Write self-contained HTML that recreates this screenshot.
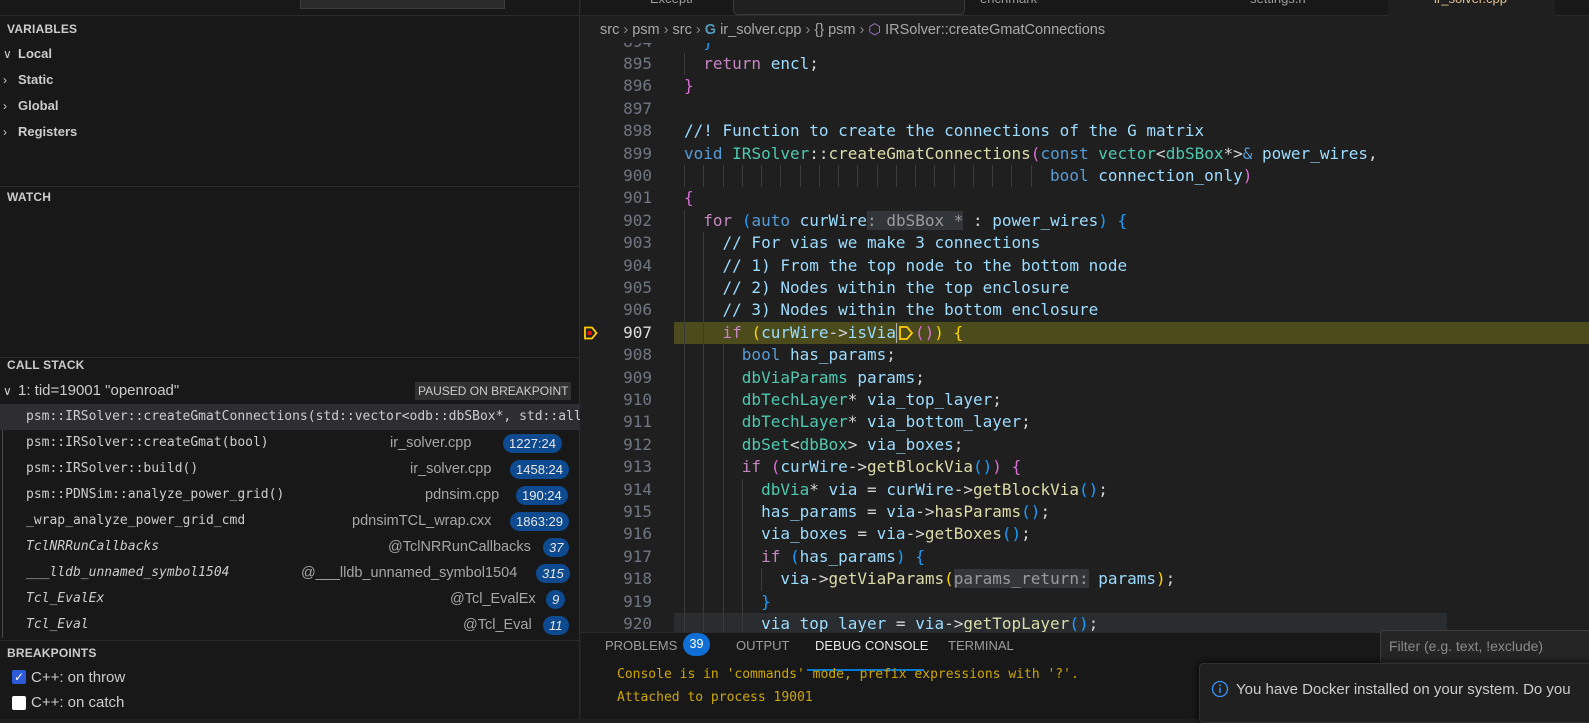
<!DOCTYPE html>
<html><head><meta charset="utf-8"><style>
*{margin:0;padding:0;box-sizing:border-box}
body{width:1589px;height:719px;overflow:hidden;background:#1f1f1f;position:relative;font-family:"Liberation Sans","DejaVu Sans",sans-serif;color:#ccc}
.abs{position:absolute}
#left{left:0;top:0;width:580px;height:719px;background:#181818;border-right:1px solid #2b2b2b}
.hdr{position:absolute;left:7px;font-size:12px;font-weight:bold;color:#ccc;letter-spacing:.2px}
.row{position:absolute;left:0;font-size:13px;color:#ccc;height:26px;line-height:26px;width:580px}
.chev{position:absolute;left:3px;top:0;color:#ccc;font-size:12px}
.sep{position:absolute;left:0;width:580px;height:1px;background:#2b2b2b}
.fr{position:absolute;left:0;width:580px;height:26px;line-height:26px;font-family:"DejaVu Sans Mono",monospace;font-size:13px;color:#ccc;overflow:hidden}
.fr .n{position:absolute;left:26px;white-space:nowrap}
.fr .f{position:absolute;font-family:"Liberation Sans",sans-serif;font-size:14.5px;color:#a6a6a6;white-space:nowrap;font-style:normal}
.fr .b{position:absolute;top:4px;height:19px;line-height:19px;background:#0e4a8f;color:#e8e8e8;border-radius:10px;font-family:"Liberation Sans",sans-serif;font-size:13px;padding:0 6px;text-align:center}
.it{font-style:italic}
#ed{left:581px;top:0;width:1008px;height:632px;background:#1f1f1f;overflow:hidden}
.code{position:absolute;left:0;top:30.5px;width:1008px;font-family:"DejaVu Sans Mono",monospace;font-size:16px}
.l{position:relative;height:22.42px;line-height:22.42px;white-space:nowrap}
.l .ln{position:absolute;left:0;width:71px;text-align:right;color:#6e7681}
.l .c{position:absolute;left:103px;color:#9cdcfe;white-space:pre}
.g{position:absolute;top:0;width:1px;height:22.42px;background:#3a3a3a}
.k{color:#c586c0}.kb{color:#569cd6}.t{color:#4ec9b0}.fn{color:#dcdcaa}.cm{color:#6a9955}.p{color:#d4d4d4}
.b1{color:#ffd700}.b2{color:#da70d6}.b3{color:#179fff}
.h{background:#333638;color:#9a9a9a}
#bc{left:581px;top:17px;height:26px;width:1008px;background:#1f1f1f;font-size:14.5px;color:#a9a9a9;line-height:26px;padding-left:19px;white-space:nowrap}
#panel{left:581px;top:632px;width:1008px;height:87px;background:#181818;border-top:1px solid #2b2b2b}
.tab{position:absolute;top:5px;font-size:13px;color:#9d9d9d}
</style></head><body>
<div id="left" class="abs">
  <div class="abs" style="left:300px;top:-4px;width:205px;height:13px;border:1px solid #3c3c3c;background:#2a2a2a"></div>
  <div class="abs" style="left:0;top:15px;width:580px;height:1px;background:#2b2b2b"></div>
  <div class="hdr" style="top:22px">VARIABLES</div>
  <div class="row" style="top:41px"><span class="chev">&#8744;</span><span style="position:absolute;left:18px;font-weight:bold;font-size:13px">Local</span></div>
  <div class="row" style="top:67px"><span class="chev">&#8250;</span><span style="position:absolute;left:18px;font-weight:bold;font-size:13px">Static</span></div>
  <div class="row" style="top:93px"><span class="chev">&#8250;</span><span style="position:absolute;left:18px;font-weight:bold;font-size:13px">Global</span></div>
  <div class="row" style="top:119px"><span class="chev">&#8250;</span><span style="position:absolute;left:18px;font-weight:bold;font-size:13px">Registers</span></div>
  <div class="sep" style="top:186px"></div>
  <div class="hdr" style="top:190px">WATCH</div>
  <div class="sep" style="top:357px"></div>
  <div class="hdr" style="top:358px">CALL STACK</div>
  <div class="row" style="top:378px"><span class="chev">&#8744;</span><span style="position:absolute;left:18px;font-size:15px">1: tid=19001 "openroad"</span>
    <span style="position:absolute;left:415px;top:4px;height:18px;line-height:18px;padding:0 3px;background:#313131;font-size:12px;color:#ccc">PAUSED ON BREAKPOINT</span></div>
  <div class="abs" style="left:2px;top:404px;width:1px;height:234px;background:#4a4a4a"></div>
  <div class="fr" style="top:404px;background:#2e2e32"><span class="n">psm::IRSolver::createGmatConnections(std::vector&lt;odb::dbSBox*, std::allo</span></div>
  <div class="fr" style="top:430px"><span class="n">psm::IRSolver::createGmat(bool)</span><span class="f" style="left:390px">ir_solver.cpp</span><span class="b" style="left:503px">1227:24</span></div>
  <div class="fr" style="top:456px"><span class="n">psm::IRSolver::build()</span><span class="f" style="left:410px">ir_solver.cpp</span><span class="b" style="left:510px">1458:24</span></div>
  <div class="fr" style="top:482px"><span class="n">psm::PDNSim::analyze_power_grid()</span><span class="f" style="left:425px">pdnsim.cpp</span><span class="b" style="left:516px">190:24</span></div>
  <div class="fr" style="top:508px"><span class="n">_wrap_analyze_power_grid_cmd</span><span class="f" style="left:352px">pdnsimTCL_wrap.cxx</span><span class="b" style="left:510px">1863:29</span></div>
  <div class="fr it" style="top:534px"><span class="n">TclNRRunCallbacks</span><span class="f it" style="left:388px">@TclNRRunCallbacks</span><span class="b" style="left:543px">37</span></div>
  <div class="fr it" style="top:560px"><span class="n">___lldb_unnamed_symbol1504</span><span class="f it" style="left:301px">@___lldb_unnamed_symbol1504</span><span class="b" style="left:536px">315</span></div>
  <div class="fr it" style="top:586px"><span class="n">Tcl_EvalEx</span><span class="f it" style="left:450px">@Tcl_EvalEx</span><span class="b" style="left:546px">9</span></div>
  <div class="fr it" style="top:612px"><span class="n">Tcl_Eval</span><span class="f it" style="left:463px">@Tcl_Eval</span><span class="b" style="left:543px">11</span></div>
  <div class="sep" style="top:640px"></div>
  <div class="hdr" style="top:646px">BREAKPOINTS</div>
  <div class="abs" style="left:12px;top:670px;width:14px;height:14px;background:#2d5bd8;border-radius:2px;color:#fff;font-size:12px;line-height:14px;text-align:center">&#10003;</div>
  <div class="abs" style="left:31px;top:669px;font-size:15px;color:#ccc">C++: on throw</div>
  <div class="abs" style="left:12px;top:696px;width:14px;height:14px;background:#fff;border-radius:2px"></div>
  <div class="abs" style="left:31px;top:694px;font-size:15px;color:#ccc">C++: on catch</div>
</div>

<div id="ed" class="abs">
<div class="code">
<div class="l"><span class="ln">894</span><span class="c">  <span class="b3">}</span></span></div>
<div class="l"><span class="ln">895</span><span class="c"><i class="g" style="left:0"></i>  <span class="k">return</span> encl<span class="p">;</span></span></div>
<div class="l"><span class="ln">896</span><span class="c"><span class="b2">}</span></span></div>
<div class="l"><span class="ln">897</span><span class="c"></span></div>
<div class="l"><span class="ln">898</span><span class="c cm">//! Function to create the connections of the G matrix</span></div>
<div class="l"><span class="ln">899</span><span class="c"><span class="kb">void</span> <span class="t">IRSolver</span><span class="p">::</span><span class="fn">createGmatConnections</span><span class="b2">(</span><span class="kb">const</span> <span class="t">vector</span><span class="p">&lt;</span><span class="t">dbSBox</span><span class="p">*&gt;</span><span class="kb">&amp;</span> power_wires<span class="p">,</span></span></div>
<div class="l"><span class="ln">900</span><span class="c"><i class="g" style="left:0"></i><i class="g" style="left:19.3px"></i><i class="g" style="left:38.5px"></i><i class="g" style="left:57.8px"></i><i class="g" style="left:77px"></i><i class="g" style="left:96.3px"></i><i class="g" style="left:115.6px"></i><i class="g" style="left:134.8px"></i><i class="g" style="left:154px"></i><i class="g" style="left:173.3px"></i><i class="g" style="left:192.6px"></i><i class="g" style="left:211.8px"></i><i class="g" style="left:231px"></i><i class="g" style="left:250.4px"></i><i class="g" style="left:269.6px"></i><i class="g" style="left:288.9px"></i><i class="g" style="left:308px"></i><i class="g" style="left:327.4px"></i><i class="g" style="left:346.6px"></i>                                      <span class="kb">bool</span> connection_only<span class="b2">)</span></span></div>
<div class="l"><span class="ln">901</span><span class="c"><span class="b2">{</span></span></div>
<div class="l"><span class="ln">902</span><span class="c"><i class="g" style="left:0"></i>  <span class="k">for</span> <span class="b3">(</span><span class="kb">auto</span> curWire<span class="h">: dbSBox *</span> <span class="p">:</span> power_wires<span class="b3">)</span> <span class="b3">{</span></span></div>
<div class="l"><span class="ln">903</span><span class="c cm"><i class="g" style="left:0"></i><i class="g" style="left:19.3px"></i>    // For vias we make 3 connections</span></div>
<div class="l"><span class="ln">904</span><span class="c cm"><i class="g" style="left:0"></i><i class="g" style="left:19.3px"></i>    // 1) From the top node to the bottom node</span></div>
<div class="l"><span class="ln">905</span><span class="c cm"><i class="g" style="left:0"></i><i class="g" style="left:19.3px"></i>    // 2) Nodes within the top enclosure</span></div>
<div class="l"><span class="ln">906</span><span class="c cm"><i class="g" style="left:0"></i><i class="g" style="left:19.3px"></i>    // 3) Nodes within the bottom enclosure</span></div>
<div class="l" style="background:linear-gradient(to right,transparent 93px,#4b4b1c 93px)"><span class="ln" style="color:#ddd">907</span><svg style="position:absolute;left:2px;top:3px" width="16" height="16" viewBox="0 0 16 16"><path d="M2 2.5h7l4.5 5.5-4.5 5.5H2z" fill="none" stroke="#ffcc00" stroke-width="1.8"/><circle cx="6.5" cy="8" r="2.3" fill="#e51400"/></svg><span class="c"><i class="g" style="left:0"></i><i class="g" style="left:19.3px"></i>    <span class="k">if</span> <span class="b1">(</span>curWire<span class="p">-&gt;</span>isVia<span style="display:inline-block;width:0;border-left:1.5px solid #aeafad;height:20px;vertical-align:middle"></span><svg width="18" height="16" viewBox="0 0 18 16" style="vertical-align:-3px"><path d="M3 2h7l5 6-5 6H3z" fill="none" stroke="#ffcc00" stroke-width="1.8"/></svg><span class="b2">()</span><span class="b1">)</span> <span class="b1">{</span></span></div>
<div class="l"><span class="ln">908</span><span class="c"><i class="g" style="left:0"></i><i class="g" style="left:19.3px"></i><i class="g" style="left:38.5px"></i>      <span class="kb">bool</span> has_params<span class="p">;</span></span></div>
<div class="l"><span class="ln">909</span><span class="c"><i class="g" style="left:0"></i><i class="g" style="left:19.3px"></i><i class="g" style="left:38.5px"></i>      <span class="t">dbViaParams</span> params<span class="p">;</span></span></div>
<div class="l"><span class="ln">910</span><span class="c"><i class="g" style="left:0"></i><i class="g" style="left:19.3px"></i><i class="g" style="left:38.5px"></i>      <span class="t">dbTechLayer</span><span class="p">*</span> via_top_layer<span class="p">;</span></span></div>
<div class="l"><span class="ln">911</span><span class="c"><i class="g" style="left:0"></i><i class="g" style="left:19.3px"></i><i class="g" style="left:38.5px"></i>      <span class="t">dbTechLayer</span><span class="p">*</span> via_bottom_layer<span class="p">;</span></span></div>
<div class="l"><span class="ln">912</span><span class="c"><i class="g" style="left:0"></i><i class="g" style="left:19.3px"></i><i class="g" style="left:38.5px"></i>      <span class="t">dbSet</span><span class="p">&lt;</span><span class="t">dbBox</span><span class="p">&gt;</span> via_boxes<span class="p">;</span></span></div>
<div class="l"><span class="ln">913</span><span class="c"><i class="g" style="left:0"></i><i class="g" style="left:19.3px"></i><i class="g" style="left:38.5px"></i>      <span class="k">if</span> <span class="b2">(</span>curWire<span class="p">-&gt;</span><span class="fn">getBlockVia</span><span class="b3">()</span><span class="b2">)</span> <span class="b2">{</span></span></div>
<div class="l"><span class="ln">914</span><span class="c"><i class="g" style="left:0"></i><i class="g" style="left:19.3px"></i><i class="g" style="left:38.5px"></i><i class="g" style="left:57.8px"></i>        <span class="t">dbVia</span><span class="p">*</span> via <span class="p">=</span> curWire<span class="p">-&gt;</span><span class="fn">getBlockVia</span><span class="b3">()</span><span class="p">;</span></span></div>
<div class="l"><span class="ln">915</span><span class="c"><i class="g" style="left:0"></i><i class="g" style="left:19.3px"></i><i class="g" style="left:38.5px"></i><i class="g" style="left:57.8px"></i>        has_params <span class="p">=</span> via<span class="p">-&gt;</span><span class="fn">hasParams</span><span class="b3">()</span><span class="p">;</span></span></div>
<div class="l"><span class="ln">916</span><span class="c"><i class="g" style="left:0"></i><i class="g" style="left:19.3px"></i><i class="g" style="left:38.5px"></i><i class="g" style="left:57.8px"></i>        via_boxes <span class="p">=</span> via<span class="p">-&gt;</span><span class="fn">getBoxes</span><span class="b3">()</span><span class="p">;</span></span></div>
<div class="l"><span class="ln">917</span><span class="c"><i class="g" style="left:0"></i><i class="g" style="left:19.3px"></i><i class="g" style="left:38.5px"></i><i class="g" style="left:57.8px"></i>        <span class="k">if</span> <span class="b3">(</span>has_params<span class="b3">)</span> <span class="b3">{</span></span></div>
<div class="l"><span class="ln">918</span><span class="c"><i class="g" style="left:0"></i><i class="g" style="left:19.3px"></i><i class="g" style="left:38.5px"></i><i class="g" style="left:57.8px"></i><i class="g" style="left:77px"></i>          via<span class="p">-&gt;</span><span class="fn">getViaParams</span><span class="b1">(</span><span class="h">params_return:</span> params<span class="b1">)</span><span class="p">;</span></span></div>
<div class="l"><span class="ln">919</span><span class="c"><i class="g" style="left:0"></i><i class="g" style="left:19.3px"></i><i class="g" style="left:38.5px"></i><i class="g" style="left:57.8px"></i>        <span class="b3">}</span></span></div>
<div class="l" style="background:linear-gradient(to right,transparent 93px,#2a2d30 93px,#2a2d30 866px,transparent 866px)"><span class="ln">920</span><span class="c"><i class="g" style="left:0"></i><i class="g" style="left:19.3px"></i><i class="g" style="left:38.5px"></i><i class="g" style="left:57.8px"></i>        via_top_layer <span class="p">=</span> via<span class="p">-&gt;</span><span class="fn">getTopLayer</span><span class="b3">()</span><span class="p">;</span></span></div>
</div>
</div>
<div class="abs" style="left:581px;top:0;width:1008px;height:16px;background:#181818;border-bottom:1px solid #2b2b2b"></div>
<div class="abs" style="left:1388px;top:0;width:167px;height:16px;background:#1f1f1f"></div>
<div class="abs" style="left:1434px;top:-9px;font-size:13px;color:#e2c08d">ir_solver.cpp</div>
<div class="abs" style="left:650px;top:-9px;font-size:13px;color:#9d9d9d">Excepti</div>
<div class="abs" style="left:980px;top:-9px;font-size:13px;color:#9d9d9d">enchmark</div>
<div class="abs" style="left:1250px;top:-9px;font-size:13px;color:#9d9d9d">settings.h</div>
<div class="abs" style="left:733px;top:0;width:232px;height:15px;background:#202020;border:1px solid #3a3a3a;border-top:none;border-radius:0 0 5px 5px"></div>
<div id="bc" class="abs">src <span style="color:#888">&#8250;</span> psm <span style="color:#888">&#8250;</span> src <span style="color:#888">&#8250;</span> <span style="color:#519aba;font-weight:bold">G</span> ir_solver.cpp <span style="color:#888">&#8250;</span> {} psm <span style="color:#888">&#8250;</span> <span style="color:#b180d7">&#11041;</span> IRSolver::createGmatConnections</div>

<div id="panel" class="abs">
  <div class="tab" style="left:24px">PROBLEMS</div>
  <div class="abs" style="left:102px;top:0;width:27px;height:23px;border-radius:12px;background:#0f6fd6;color:#fff;font-size:12.5px;line-height:23px;text-align:center">39</div>
  <div class="tab" style="left:155px">OUTPUT</div>
  <div class="tab" style="left:234px;color:#e7e7e7">DEBUG CONSOLE</div>
  <div class="abs" style="left:226px;top:36px;height:2px;width:117px;background:#0078d4"></div>
  <div class="tab" style="left:367px">TERMINAL</div>
  <div class="abs" style="left:799px;top:-3px;width:210px;height:33px;background:#252525;border:1px solid #3c3c3c;border-radius:2px;font-size:14px;color:#8a8a8a;line-height:31px;padding-left:8px">Filter (e.g. text, !exclude)</div>
  <div class="abs" style="left:36px;top:34px;font-family:'DejaVu Sans Mono',monospace;font-size:13px;color:#cca700;white-space:pre">Console is in 'commands' mode, prefix expressions with '?'.</div>
  <div class="abs" style="left:36px;top:57px;font-family:'DejaVu Sans Mono',monospace;font-size:13px;color:#cca700;white-space:pre">Attached to process 19001</div>
  <div class="abs" style="left:618px;top:30px;width:400px;height:60px;background:#202020;border:1px solid #303030;border-radius:4px;box-shadow:0 0 8px #000"></div>
  <svg class="abs" style="left:630px;top:47px" width="18" height="18" viewBox="0 0 18 18"><circle cx="9" cy="9" r="7.5" fill="none" stroke="#3794ff" stroke-width="1.3"/><rect x="8.3" y="7.5" width="1.4" height="5.5" fill="#3794ff"/><circle cx="9" cy="5.3" r=".9" fill="#3794ff"/></svg>
  <div class="abs" style="left:655px;top:48px;font-size:15px;color:#ccc;white-space:nowrap">You have Docker installed on your system. Do you</div>
</div>
</body></html>
